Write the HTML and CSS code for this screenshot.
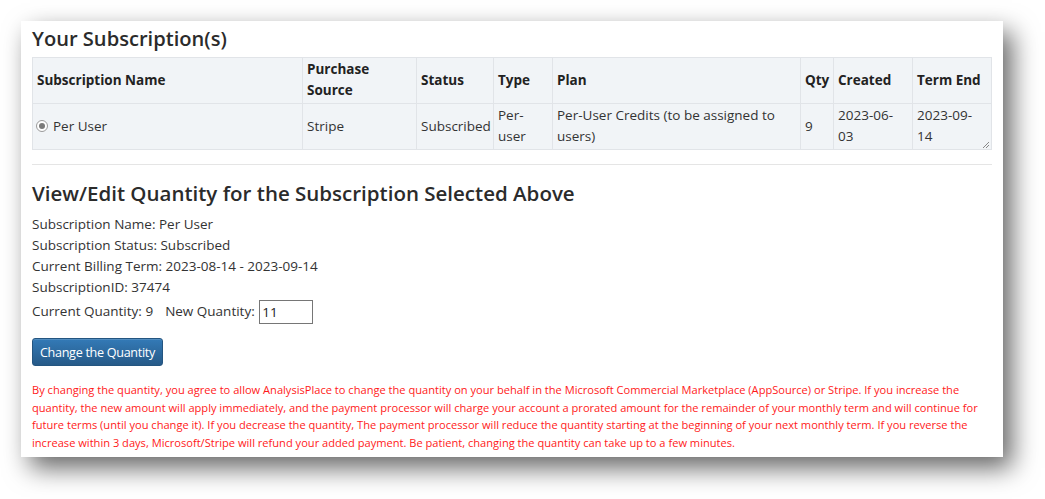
FILE: index.html
```html
<!DOCTYPE html>
<html>
<head>
<meta charset="utf-8">
<link rel="stylesheet" href="styles.css">
</head>
<body>
<div class="card">
  <h1 class="title">Your Subscription(s)</h1>
  <div class="table-wrap">
    <table class="subs">
      <colgroup>
        <col class="c1"><col class="c2"><col class="c3"><col class="c4"><col class="c5"><col class="c6"><col class="c7"><col class="c8">
      </colgroup>
      <thead>
        <tr>
          <th>Subscription Name</th>
          <th>Purchase Source</th>
          <th>Status</th>
          <th>Type</th>
          <th>Plan</th>
          <th>Qty</th>
          <th>Created</th>
          <th>Term End</th>
        </tr>
      </thead>
      <tbody>
        <tr>
          <td><span class="radio"><span class="dot"></span></span>Per User</td>
          <td>Stripe</td>
          <td>Subscribed</td>
          <td>Per-user</td>
          <td>Per-User Credits (to be assigned to users)</td>
          <td>9</td>
          <td class="date">2023-06-03</td>
          <td class="date">2023-09-14</td>
        </tr>
      </tbody>
    </table>
    <svg class="grip" width="8" height="8" viewBox="0 0 8 8"><path d="M1 7 L7 1 M4 7 L7 4" stroke="#888" stroke-width="1" fill="none"/></svg>
  </div>
  <hr class="sep">
  <h2 class="subtitle">View/Edit Quantity for the Subscription Selected Above</h2>
  <div class="info">
    <div class="line">Subscription Name: Per User</div>
    <div class="line">Subscription Status: Subscribed</div>
    <div class="line">Current Billing Term: 2023-08-14 - 2023-09-14</div>
    <div class="line">SubscriptionID: 37474</div>
    <div class="line qty">Current Quantity: 9<span class="gap"></span>New Quantity:&nbsp;<input class="qty-input" type="text" value="11"></div>
  </div>
  <button class="btn">Change the Quantity</button>
  <p class="notice">By changing the quantity, you agree to allow AnalysisPlace to change the quantity on your behalf in the Microsoft Commercial Marketplace (AppSource) or Stripe. If you increase the quantity, the new amount will apply immediately, and the payment processor will charge your account a prorated amount for the remainder of your monthly term and will continue for future terms (until you change it). If you decrease the quantity, The payment processor will reduce the quantity starting at the beginning of your next monthly term. If you reverse the increase within 3 days, Microsoft/Stripe will refund your added payment. Be patient, changing the quantity can take up to a few minutes.</p>
</div>
</body>
</html>
```

FILE: styles.css
```css
html, body {
  margin: 0;
  padding: 0;
  background: #ffffff;
}
body {
  font-family: "Open Sans", "Noto Sans", sans-serif;
  color: #333333;
  height: 499px;
}
.card {
  margin: 21px 0 0 21px;
  width: 960px;
  height: 436px;
  padding: 0 11px;
  background: #ffffff;
  box-shadow: 9px 11px 24px rgba(0, 0, 0, 0.6);
  box-sizing: content-box;
  overflow: hidden;
}
.title {
  margin: 0;
  padding-top: 3px;
  height: 33px;
  font-size: 20.1px;
  font-weight: 600;
  line-height: 30px;
  color: #2b2b2b;
}
.table-wrap {
  position: relative;
  width: 959px;
}
.subs {
  width: 959px;
  border-collapse: collapse;
  table-layout: fixed;
  background: #f1f4f7;
  font-size: 13.5px;
  line-height: 21px;
}
.c1 { width: 270px; }
.c2 { width: 114px; }
.c3 { width: 77px; }
.c4 { width: 59px; }
.c5 { width: 248px; }
.c6 { width: 33px; }
.c7 { width: 79px; }
.c8 { width: 79px; }
.subs th, .subs td {
  border: 1px solid #e1e4e8;
  padding: 1px 3px 2px 4px;
  text-align: left;
  vertical-align: middle;
  height: 42px;
  color: #333333;
}
.subs td.date {
  padding-right: 12px;
}
.subs th {
  font-weight: 700;
  color: #222222;
}
.radio {
  display: inline-block;
  width: 12px;
  height: 12px;
  border: 1px solid #9a9a9a;
  border-radius: 50%;
  margin: 0 5px 0 -1px;
  vertical-align: -1px;
  position: relative;
  box-sizing: border-box;
  background: #fff;
}
.dot {
  position: absolute;
  left: 2px;
  top: 2px;
  width: 6px;
  height: 6px;
  border-radius: 50%;
  background: #7a7a7a;
}
.grip {
  position: absolute;
  right: 1px;
  bottom: 1px;
}
.sep {
  margin: 14px 0 0 0;
  border: 0;
  border-top: 1px solid #e5e5e5;
  width: 960px;
}
.subtitle {
  margin: 0;
  padding-top: 14px;
  font-size: 20.5px;
  font-weight: 600;
  line-height: 28px;
  color: #2b2b2b;
}
.info {
  margin-top: 7px;
  font-size: 13.5px;
  line-height: 21px;
}
.line {
  height: 21px;
}
.qty {
  height: 27px;
  display: flex;
  align-items: center;
  margin-top: 0;
}
.gap {
  display: inline-block;
  width: 12px;
}
.qty-input {
  width: 54px;
  height: 24px;
  box-sizing: border-box;
  border: 1px solid #767676;
  font-family: "Open Sans", sans-serif;
  font-size: 13.5px;
  padding: 0 2px;
  color: #222;
  border-radius: 0;
  margin-left: 1px;
}
.btn {
  display: block;
  margin-top: 13px;
  width: 131px;
  height: 28px;
  padding: 0;
  border: 1px solid #245580;
  border-radius: 3px;
  background: linear-gradient(to bottom, #337ab7 0%, #265a88 100%);
  color: #ffffff;
  font-family: "Open Sans", sans-serif;
  font-size: 12.6px;
  letter-spacing: -0.3px;
  box-shadow: inset 0 1px 0 rgba(255,255,255,0.15);
}
.notice {
  margin: 15px 0 0 0;
  font-size: 11.1px;
  line-height: 17.6px;
  color: #ff1a1a;
}
```
